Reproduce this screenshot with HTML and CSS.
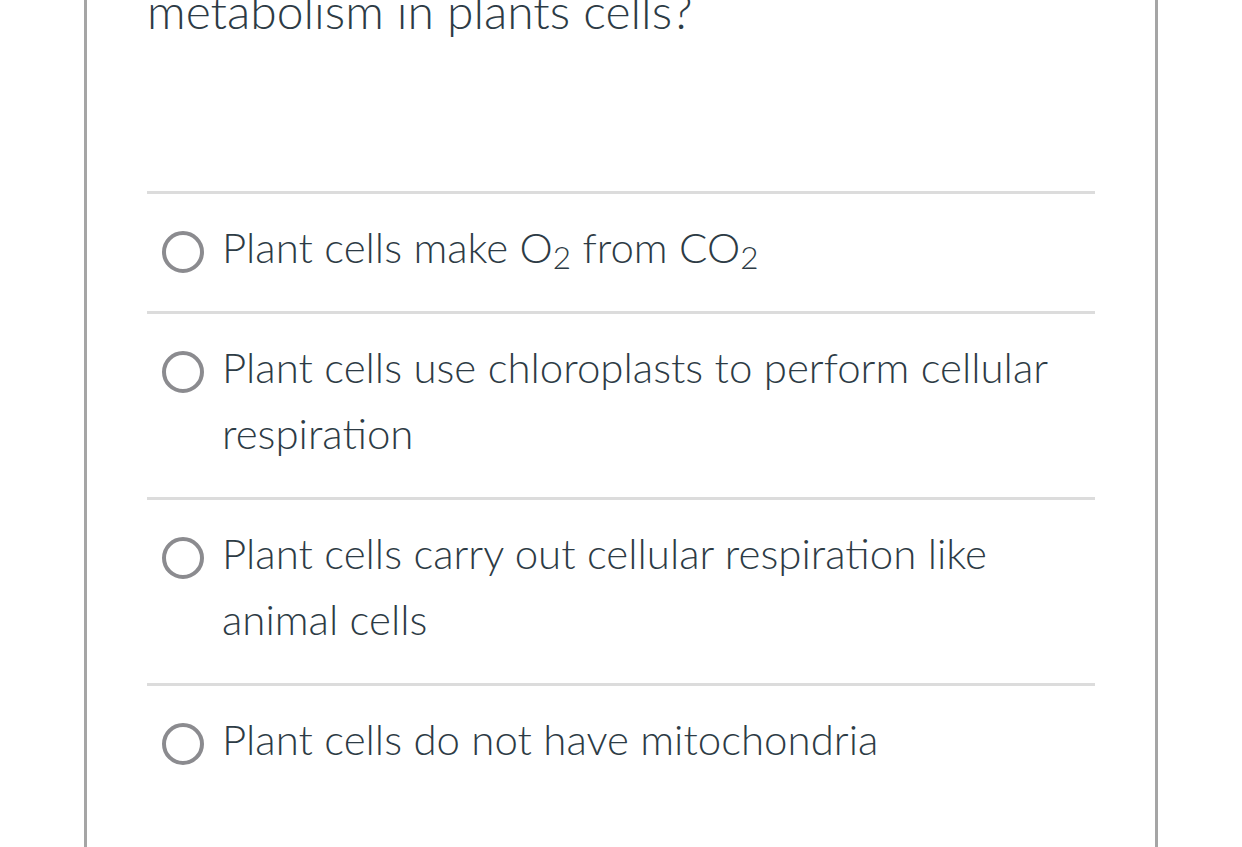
FILE: index.html
```html
<!DOCTYPE html>
<html>
<head>
<meta charset="utf-8">
<link rel="stylesheet" href="styles.css">
</head>
<body>
<div class="card">
  <div class="question">metabolism in plants cells?</div>
  <div class="answers">
    <div class="answer"><span class="radio"></span><span class="label">Plant cells make O<sub>2</sub> from CO<sub>2</sub></span></div>
    <div class="answer"><span class="radio"></span><span class="label">Plant cells use chloroplasts to perform cellular respiration</span></div>
    <div class="answer"><span class="radio"></span><span class="label">Plant cells carry out cellular respiration like animal cells</span></div>
    <div class="answer"><span class="radio"></span><span class="label">Plant cells do not have mitochondria</span></div>
  </div>
</div>
</body>
</html>
```
FILE: styles.css
```css
html, body {
  margin: 0;
  padding: 0;
  background: #fff;
  overflow: hidden;
}
body {
  font-family: "Lato Light", Lato, "Noto Sans", sans-serif;
  font-weight: 300;
  color: #2d3b45;
  height: 847px;
}
.card {
  margin-left: 84px;
  height: 900px;
  border-left: 3px solid #a5a5a5;
  border-right: 3px solid #a5a5a5;
  padding: 0 60px;
  box-sizing: content-box;
  width: 948px;
}
.question {
  font-size: 48px;
  line-height: 66px;
  margin-top: -22px;
  height: 213px;
  white-space: nowrap;
}
.answer {
  border-top: 3px solid #dcdcdc;
  display: flex;
  align-items: flex-start;
  padding: 20px 0 31px 15px;
  font-size: 42px;
  line-height: 66px;
}
.radio {
  flex: none;
  width: 34px;
  height: 34px;
  border: 4px solid #8b8b8f;
  border-radius: 50%;
  margin-top: 17px;
  margin-right: 18px;
}
.label {
  flex: 1;
  padding-right: 40px;
}
sub {
  font-size: 0.75em;
  line-height: 0;
  vertical-align: -0.2em;
}
```
